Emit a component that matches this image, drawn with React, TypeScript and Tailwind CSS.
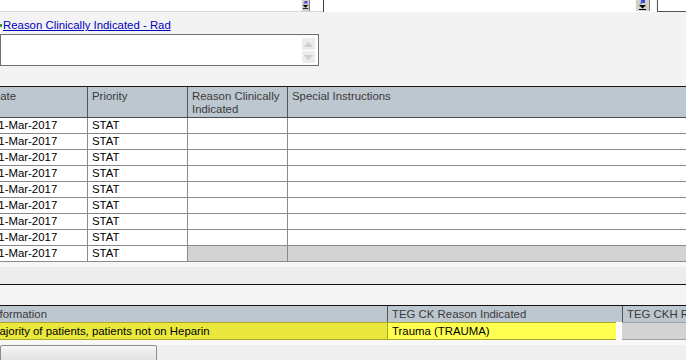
import React from "react";

const font = { fontFamily: '"Liberation Sans", Arial, sans-serif' };

function DropButton({ w }: { w: string }) {
  return (
    <div className={`${w} shrink-0 h-[11px] bg-[#d4d0c8] border-l border-[#f8f8f8] border-r border-r-[#808080] flex items-end justify-center pb-[1px]`}>
      <svg width="9" height="10" viewBox="0 0 9 10">
        <rect x="3" y="0" width="4" height="3" fill="#3a4bd0" />
        <rect x="2" y="2" width="2" height="2" fill="#7a86e8" />
        <path d="M1 5h7L4.5 8.5z" fill="#000" />
        <rect x="1" y="9" width="7" height="1" fill="#000" />
      </svg>
    </div>
  );
}

const rows = Array.from({ length: 9 }, () => ({ date: "01-Mar-2017", priority: "STAT" }));

export default function App() {
  return (
    <div className="w-[686px] h-[360px] overflow-hidden bg-[#f3f3f3] text-[11.4px] text-black" style={font}>
      {/* top fields */}
      <div className="flex h-[12px]">
        <div className="flex shrink-0 w-[323px] bg-white border-b border-[#d6d6d6]">
          <div className="w-[301px]" />
          <DropButton w="w-[9px]" />
        </div>
        <div className="flex shrink-0 w-[333px] bg-white border-l border-[#404040]">
          <div className="w-[311px]" />
          <DropButton w="w-[15px]" />
        </div>
        <div className="w-[1px]" />
        <div className="flex-1 bg-white border-l border-b border-[#555]" />
      </div>

      {/* link */}
      <div className="flex items-center h-[22px] pt-[4px]">
        <div className="w-[2px] h-[3px] bg-[#2e9b2e] mr-[1px]" />
        <a className="text-[#0000c0] underline leading-[14px]">Reason Clinically Indicated - Rad</a>
      </div>

      {/* textarea */}
      <div className="w-[319px] h-[32px] bg-white border border-[#6f6f6f] flex justify-end pr-[3px] pt-[3px]">
        <div className="flex flex-col gap-[1px]">
          <div className="w-[13px] h-[12px] bg-[#ececec] flex items-center justify-center">
            <svg width="9" height="5" viewBox="0 0 9 5"><path d="M0 5L4.5 0L9 5z" fill="#cfcfcf" /></svg>
          </div>
          <div className="w-[13px] h-[12px] bg-[#ececec] flex items-center justify-center">
            <svg width="9" height="5" viewBox="0 0 9 5"><path d="M0 0L4.5 5L9 0z" fill="#cfcfcf" /></svg>
          </div>
        </div>
      </div>

      {/* main grid */}
      <div className="mt-[20px] border-t border-[#1a1a1a] -ml-[11px] w-[697px]">
        <div className="flex h-[31px] bg-[#bdc7cf] border-b border-[#4a4a4a] text-[#3a3a3a] leading-[13px]">
          <div className="w-[98px] shrink-0 pl-[3px] pt-[3px]">Date</div>
          <div className="w-[100px] shrink-0 pl-[4px] pt-[3px] border-l border-[#555]">Priority</div>
          <div className="w-[100px] shrink-0 pl-[4px] pt-[3px] border-l border-[#555]">Reason Clinically Indicated</div>
          <div className="flex-1 pl-[4px] pt-[3px] border-l border-[#555]">Special Instructions</div>
        </div>
        {rows.map((r, i) => {
          const last = i === rows.length - 1;
          return (
            <div key={i} className="flex h-[16px] bg-white border-b border-[#8a8a8a] leading-[15px]">
              <div className="w-[98px] shrink-0 pl-[3px]">{r.date}</div>
              <div className="w-[100px] shrink-0 pl-[4px] border-l border-[#8a8a8a]">{r.priority}</div>
              <div className={`w-[100px] shrink-0 border-l border-[#8a8a8a] ${last ? "bg-[#d3d3d3]" : ""}`} />
              <div className={`flex-1 border-l border-[#8a8a8a] ${last ? "bg-[#d3d3d3]" : ""}`} />
            </div>
          );
        })}
      </div>

      <div className="h-[5px] bg-[#f6f6f6]" />
      <div className="h-[18px] bg-[#ececec] border-b border-[#111]" />
      <div className="h-[21px] bg-[#f4f4f4] border-b border-[#111]" />

      {/* bottom grid */}
      <div className="-ml-[13px] w-[699px]">
        <div className="flex h-[16px] bg-[#bdc7cf] text-[#3a3a3a] leading-[16px]">
          <div className="w-[400px] shrink-0 pl-[3px]">Information</div>
          <div className="w-[235px] shrink-0 pl-[4px] border-l border-[#555]">TEG CK Reason Indicated</div>
          <div className="flex-1 min-w-0 pl-[4px] border-l border-[#555] whitespace-nowrap overflow-hidden">TEG CKH Reason Indicated</div>
        </div>
        <div className="flex h-[18px] leading-[16px]">
          <div className="w-[400px] shrink-0 pl-[3px] bg-[#eae83c] border-y border-[#a9a82a]">Majority of patients, patients not on Heparin</div>
          <div className="w-[229px] shrink-0 pl-[4px] bg-[#ffff50] border-y border-l border-[#a9a82a]">Trauma (TRAUMA)</div>
          <div className="w-[6px] shrink-0 bg-white" />
          <div className="flex-1 bg-[#d3d3d3] border-y border-[#a0a0a0]" />
        </div>
      </div>

      <div className="h-[5px] bg-[#f8f8f8]" />
      <div className="bg-[#efefef] h-[20px]">
        <div className="w-[157px] h-[20px] rounded-t-[2px] border border-[#8c8c8c] bg-gradient-to-b from-[#f6f6f6] to-[#dcdcdc]" />
      </div>
    </div>
  );
}
